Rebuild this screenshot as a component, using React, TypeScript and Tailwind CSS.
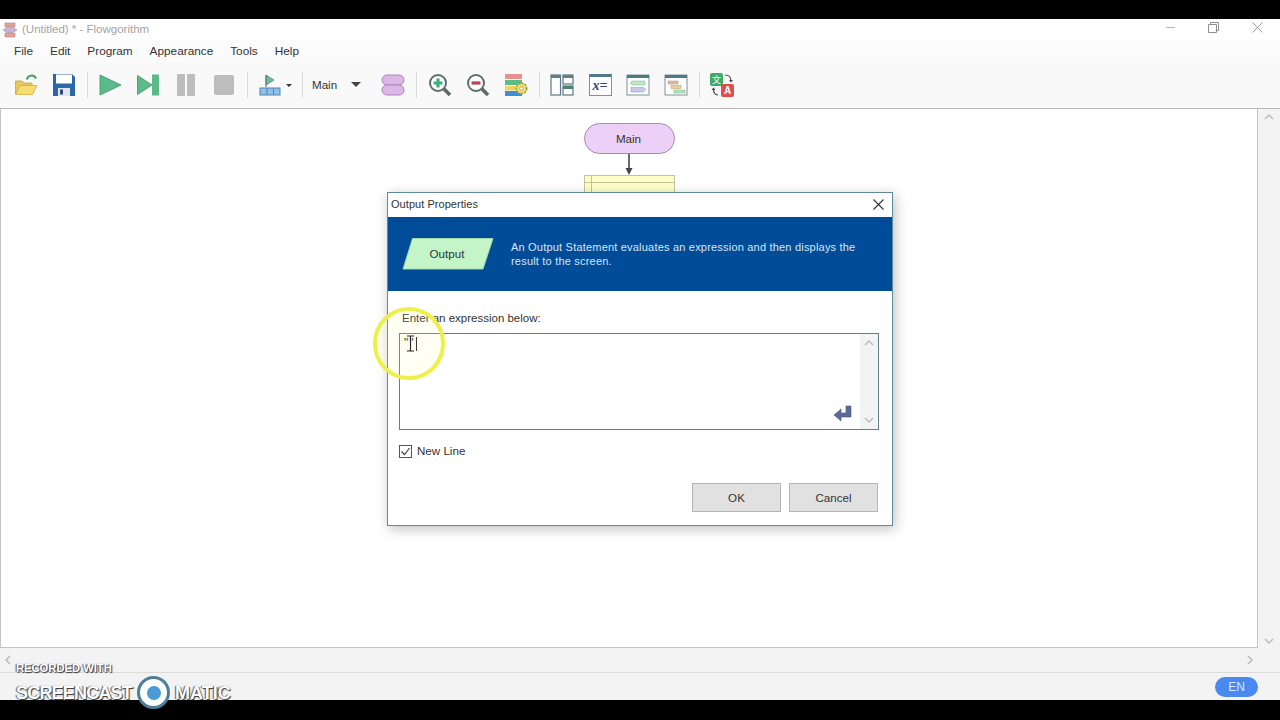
const Sep = () => (
  <div className="w-[8px] h-[26px] flex justify-center shrink-0">
    <div className="w-px h-full bg-[#dcdcdc]" />
  </div>
);

const Btn = ({ children }: { children: React.ReactNode }) => (
  <div className="w-[38px] h-[30px] flex items-center justify-center shrink-0">{children}</div>
);

const Open = () => (
  <svg width="24" height="24" viewBox="0 0 24 24">
    <path d="M13 6.5 C13.5 2 20 1 22 5.5" fill="none" stroke="#3f9a68" strokeWidth="2" />
    <path d="M1.5 21 V8 H8 L10 10 H18 V13 H6 Z" fill="#e8c85c" stroke="#c9a63a" strokeWidth="0.8" />
    <path d="M1.5 21.5 L6 12.5 H23 L18.5 21.5 Z" fill="#f6dc74" stroke="#cfae42" strokeWidth="0.8" />
  </svg>
);
const Save = () => (
  <svg width="24" height="24" viewBox="0 0 24 24">
    <path d="M1 1 H20 L23 4 V23 H1 Z" fill="#2c68a8" />
    <rect x="4" y="1.5" width="16" height="9" fill="#fff" />
    <rect x="6" y="15" width="12" height="8" fill="#dfe6ee" />
    <rect x="8" y="16.5" width="3" height="5" fill="#2b4e78" />
  </svg>
);
const Play = () => (
  <svg width="24" height="24" viewBox="0 0 24 24">
    <path d="M2 2 L23 12 L2 22 Z" fill="#5cb98a" stroke="#4ba377" strokeWidth="1" />
  </svg>
);
const Step = () => (
  <svg width="24" height="24" viewBox="0 0 24 24">
    <path d="M1.5 2.5 L16 12 L1.5 21.5 Z" fill="#5cb98a" stroke="#4ba377" strokeWidth="1" />
    <rect x="16" y="1.5" width="7" height="21" fill="#5cb98a" />
  </svg>
);
const Pause = () => (
  <svg width="20" height="24" viewBox="0 0 20 24">
    <rect x="1" y="1" width="8" height="22" fill="#bdbdbd" />
    <rect x="11" y="1" width="8" height="22" fill="#bdbdbd" />
  </svg>
);
const Stop = () => (
  <svg width="22" height="22" viewBox="0 0 22 22">
    <rect x="1" y="1" width="20" height="20" rx="2" fill="#bdbdbd" />
  </svg>
);
const Layout = () => (
  <svg width="22" height="22" viewBox="0 0 22 22">
    <path d="M7 1 L15 6 L7 11 Z" fill="#6cbf95" stroke="#4a8f72" strokeWidth="0.8" />
    <line x1="7" y1="1" x2="7" y2="13" stroke="#5b7f93" strokeWidth="1.2" />
    <rect x="1" y="14" width="20" height="7" fill="#8fc1e8" stroke="#4f86b5" strokeWidth="1" />
    <line x1="8" y1="14" x2="8" y2="21" stroke="#4f86b5" />
    <line x1="14.5" y1="14" x2="14.5" y2="21" stroke="#4f86b5" />
  </svg>
);
const Shapes = () => (
  <svg width="24" height="24" viewBox="0 0 24 24">
    <rect x="1" y="2" width="22" height="10" rx="5" fill="#dcb7e8" stroke="#a887b4" strokeWidth="1" />
    <rect x="1" y="12" width="22" height="10" rx="5" fill="#dcb7e8" stroke="#a887b4" strokeWidth="1" />
  </svg>
);
const Zoom = ({ plus }: { plus?: boolean }) => (
  <svg width="24" height="24" viewBox="0 0 24 24">
    <line x1="15" y1="15" x2="22" y2="22" stroke="#5d6a6a" strokeWidth="3.6" />
    <circle cx="10" cy="10" r="8" fill="#fff" stroke="#5d6f6c" strokeWidth="2" />
    {plus ? (
      <path d="M10 5.5 V14.5 M5.5 10 H14.5" stroke="#3eae7c" strokeWidth="3.2" />
    ) : (
      <path d="M5.5 10 H14.5" stroke="#b8464c" strokeWidth="3.2" />
    )}
  </svg>
);
const Styles = () => (
  <svg width="24" height="24" viewBox="0 0 24 24">
    <rect x="1" y="1" width="17" height="5" fill="#ea8f92" />
    <rect x="1" y="7" width="17" height="5" fill="#59bd85" />
    <rect x="1" y="13" width="17" height="4.5" fill="#f1d45e" />
    <rect x="1" y="18" width="17" height="5" fill="#3d8fd0" />
    <circle cx="17.5" cy="15.5" r="5.2" fill="#efe27a" stroke="#a49a3a" strokeWidth="1.6" strokeDasharray="2 1" />
    <circle cx="17.5" cy="15.5" r="1.8" fill="#fff" stroke="#a49a3a" strokeWidth="0.8" />
  </svg>
);
const Panes = () => (
  <svg width="24" height="22" viewBox="0 0 24 22">
    <rect x="1" y="1" width="9.5" height="20" fill="#fff" stroke="#5f7780" strokeWidth="1.2" />
    <rect x="1" y="1" width="9.5" height="3" fill="#5f7f88" />
    <rect x="13" y="1" width="10" height="9" fill="#fff" stroke="#5f7780" strokeWidth="1.2" />
    <rect x="13" y="1" width="10" height="3" fill="#5f7f88" />
    <rect x="13" y="12" width="10" height="9" fill="#fff" stroke="#5f7780" strokeWidth="1.2" />
    <rect x="13" y="12" width="10" height="3" fill="#4e8370" />
  </svg>
);
const VarWin = () => (
  <div className="relative w-[23px] h-[22px] border border-[#7f9298] border-t-[3px] border-t-[#4d7a88] bg-white flex items-center justify-center font-['Liberation_Serif',serif] italic font-bold text-[14px] leading-none text-[#33457a]">
    x=
  </div>
);
const Win = ({ chart }: { chart?: boolean }) => (
  <svg width="24" height="22" viewBox="0 0 24 22">
    <rect x="1" y="1" width="22" height="20" fill="#fff" stroke="#7f9298" strokeWidth="1" />
    <rect x="1" y="1" width="22" height="3" fill="#4d7a88" />
    {chart ? (
      <>
        <rect x="4" y="7" width="10" height="3" fill="#e2b7a6" stroke="#b08a78" strokeWidth="0.5" />
        <rect x="7" y="11.5" width="10" height="3" fill="#e6cf9a" stroke="#b09c6a" strokeWidth="0.5" />
        <rect x="10" y="16" width="11" height="3" fill="#b7e4be" stroke="#7fae88" strokeWidth="0.5" />
      </>
    ) : (
      <>
        <path d="M6 7 H19 V11 H6 L4 9 Z" fill="#bfe8c6" stroke="#83b58e" strokeWidth="0.5" />
        <path d="M5 13.5 H17 L20 15.5 L17 18 H5 Z" fill="#c9c8ef" stroke="#908fc0" strokeWidth="0.5" />
      </>
    )}
  </svg>
);
const Translate = () => (
  <div className="relative w-[24px] h-[24px]">
    <div className="absolute left-0 top-0 w-[13px] h-[13px] rounded-[2px] bg-[#3fa968] text-white text-[9px] leading-[13px] text-center font-['Noto_Sans_CJK_SC',sans-serif]">文</div>
    <div className="absolute right-0 bottom-0 w-[13px] h-[13px] rounded-[2px] bg-[#d9504f] text-white text-[10px] font-bold leading-[13px] text-center font-['Liberation_Sans',sans-serif]">A</div>
    <svg className="absolute inset-0" width="24" height="24" viewBox="0 0 24 24">
      <path d="M15 2 C19 2 21 4 21 8" fill="none" stroke="#444" strokeWidth="1.1" />
      <path d="M19 7 L21 9.5 L23 7 Z" fill="#444" />
      <path d="M8 22 C5 22 3.5 20 3.5 16" fill="none" stroke="#444" strokeWidth="1.1" />
      <path d="M1.5 17 L3.5 14.5 L5.5 17 Z" fill="#444" />
    </svg>
  </div>
);

const Chevron = ({ d }: { d: string }) => (
  <svg width="10" height="10" viewBox="0 0 10 10">
    <path d={d} fill="none" stroke="#bcbcbc" strokeWidth="1.5" />
  </svg>
);

export default function App() {
  return (
    <div className="relative w-[1280px] h-[720px] overflow-hidden bg-black font-['Liberation_Sans',sans-serif] flex flex-col">
      <div className="h-[19px] shrink-0 bg-black" />

      <div className="h-[21px] shrink-0 bg-white flex items-center pl-[2px] pt-px relative">
        <svg width="16" height="16" viewBox="0 0 16 16">
          <rect x="3" y="1" width="10" height="4" fill="#e9a08f" stroke="#a98a8a" strokeWidth="0.6" />
          <path d="M1 8 L8 4 L15 8 L8 12 Z" fill="#c9b2d8" stroke="#9c8aa8" strokeWidth="0.6" />
          <rect x="3" y="11" width="10" height="4" fill="#e9a08f" stroke="#a98a8a" strokeWidth="0.6" />
        </svg>
        <span className="ml-[4px] text-[11.5px] text-[#a3a3a3]">(Untitled) * - Flowgorithm</span>
        <div className="absolute right-[17px] top-[3px] flex items-center gap-[33px]">
          <div className="w-[9px] h-px bg-[#b5b5b5]" />
          <svg width="11" height="11" viewBox="0 0 11 11">
            <path d="M0.5 2.5 H8.5 V10.5 H0.5 Z M2.5 2.5 V0.5 H10.5 V8.5 H8.5" fill="none" stroke="#8f8f8f" />
          </svg>
          <svg width="11" height="11" viewBox="0 0 11 11">
            <path d="M0.5 0.5 L10.5 10.5 M10.5 0.5 L0.5 10.5" stroke="#9a9a9a" />
          </svg>
        </div>
      </div>

      <div className="h-[22px] shrink-0 bg-[#fbfbfb] flex items-center pl-[14px] gap-[17px] pt-[1px] text-[11.8px] text-[#333]">
        <span>File</span>
        <span>Edit</span>
        <span>Program</span>
        <span>Appearance</span>
        <span>Tools</span>
        <span>Help</span>
      </div>

      <div className="h-[47px] shrink-0 bg-[#f8f9f8] border-b border-[#b9b9b9] flex items-center pl-[7px]">
        <Btn><Open /></Btn>
        <Btn><Save /></Btn>
        <Sep />
        <Btn><Play /></Btn>
        <Btn><Step /></Btn>
        <Btn><Pause /></Btn>
        <Btn><Stop /></Btn>
        <Sep />
        <div className="w-[47px] h-[30px] shrink-0 flex items-center pl-[8px] gap-[5px]">
          <Layout />
          <div className="w-0 h-0 border-x-[3px] border-x-transparent border-t-[3px] border-t-[#333]" />
        </div>
        <Sep />
        <div className="w-[68px] shrink-0 flex items-center pl-[6px] text-[11.6px] text-[#333]">
          <span>Main</span>
          <div className="ml-[14px] w-0 h-0 border-x-[5px] border-x-transparent border-t-[5px] border-t-[#444]" />
        </div>
        <Btn><Shapes /></Btn>
        <div className="w-[9px] flex justify-center shrink-0">
          <div className="w-px h-[26px] bg-[#dcdcdc]" />
        </div>
        <Btn><Zoom plus /></Btn>
        <Btn><Zoom /></Btn>
        <Btn><Styles /></Btn>
        <Sep />
        <Btn><Panes /></Btn>
        <Btn><VarWin /></Btn>
        <Btn><Win /></Btn>
        <Btn><Win chart /></Btn>
        <Sep />
        <Btn><Translate /></Btn>
      </div>

      <div className="h-[539px] shrink-0 flex bg-[#f3f3f3]">
        <div className="relative w-[1258px] bg-white border-l border-r border-b border-[#c4c4c4] shrink-0 overflow-hidden">
          {/* flowchart nodes sit on a free canvas */}
          <div className="absolute left-[583px] top-[14px] w-[91px] h-[31px] rounded-full bg-[#ecd0f8] border border-[#a58bb0] flex items-center justify-center text-[11.6px] text-[#333]">
            <span className="-ml-[2px]">Main</span>
          </div>
          <svg className="absolute left-[623px] top-[45px]" width="10" height="22" viewBox="0 0 10 22">
            <line x1="5" y1="0" x2="5" y2="15" stroke="#444" strokeWidth="1.6" />
            <path d="M1.5 14 H8.5 L5 21 Z" fill="#444" />
          </svg>
          <div className="absolute left-[583px] top-[66px] w-[91px] h-[40px] bg-[#ffffc8] border border-[#c4c498]">
            <div className="absolute left-[6px] top-0 bottom-0 w-px bg-[#c4c498]" />
            <div className="absolute left-0 right-0 top-[6px] h-px bg-[#c4c498]" />
          </div>
        </div>
        <div className="flex-1 flex flex-col items-center justify-between pt-[3px] pb-[2px]">
          <Chevron d="M1 7 L5 3 L9 7" />
          <Chevron d="M1 3 L5 7 L9 3" />
        </div>
      </div>

      <div className="h-[25px] shrink-0 bg-[#f3f3f3] border-b border-[#dcdcdc] flex items-center justify-between pl-[3px] pr-[25px]">
        <Chevron d="M7 1 L3 5 L7 9" />
        <Chevron d="M3 1 L7 5 L3 9" />
      </div>

      <div className="h-[27px] shrink-0 bg-[#f3f3f3] flex items-center justify-end pr-[22px]">
        <div className="w-[43px] h-[20px] rounded-full bg-[#4a8af0] text-[#dbe8ff] text-[12px] flex items-center justify-center">EN</div>
      </div>

      <div className="flex-1 bg-black" />

      {/* modal dialog */}
      <div className="absolute left-[387px] top-[192px] w-[506px] h-[334px] bg-white border border-[#5f8a9c] shadow-[2px_3px_12px_rgba(0,0,0,0.25)] flex flex-col">
        <div className="h-[24px] shrink-0 flex items-center justify-between pl-[3px] pr-[8px] pb-[2px] text-[11px] tracking-[0.05px] text-[#333]">
          <span>Output Properties</span>
          <svg width="11" height="11" viewBox="0 0 11 11">
            <path d="M0.5 0.5 L10.5 10.5 M10.5 0.5 L0.5 10.5" stroke="#333" strokeWidth="1.1" />
          </svg>
        </div>
        <div className="h-[74px] shrink-0 bg-[#004c99] flex items-center pl-[14px] pb-px">
          <svg width="92" height="32" viewBox="0 0 92 32" className="shrink-0">
            <path d="M10.5 0.5 H91 L81 31 H1 Z" fill="#c3f5c8" stroke="#9ed8a6" />
            <text x="45" y="20" textAnchor="middle" fontSize="11.6" fill="#333" fontFamily="Liberation Sans, sans-serif">Output</text>
          </svg>
          <p className="ml-[17px] w-[360px] text-[11px] leading-[14px] tracking-[0.2px] text-[#d6e6f5]">
            An Output Statement evaluates an expression and then displays the result to the screen.
          </p>
        </div>
        <div className="flex-1 flex flex-col px-[11px] pt-[21px]">
          <div className="pl-[3px] h-[14px] flex items-center text-[11.5px] leading-none tracking-[0px] text-[#333]">Enter an expression below:</div>
          <div className="mt-[7px] w-[480px] h-[97px] border border-[#5f7f8f] bg-white flex justify-between shrink-0">
            <div className="relative pl-[4px] pt-[2px] text-[12px] text-[#333] leading-[14px] flex">
              <span className="tracking-[1px]">""</span>
              <span className="ml-[1px] w-px h-[14px] mt-[1px] bg-[#222]" />
            </div>
            <div className="relative w-[18px] bg-[#f2f3f5] flex flex-col items-center justify-between py-[4px]">
              <Chevron d="M1 7 L5 3 L9 7" />
              <Chevron d="M1 3 L5 7 L9 3" />
              <svg className="absolute left-[-27px] top-[71px]" width="20" height="17" viewBox="0 0 20 17">
                <path d="M13 1 H18 V12 H8 V16 L1 10 L8 4 V8 H13 Z" fill="#5d6b9c" stroke="#46527c" strokeWidth="0.6" />
              </svg>
            </div>
          </div>
          <div className="mt-[13px] flex items-center h-[16px]">
            <div className="w-[13px] h-[13px] border border-[#555] bg-white flex items-center justify-center">
              <svg width="11" height="11" viewBox="0 0 11 11">
                <path d="M1.5 5.5 L4.5 8.5 L9.5 2" fill="none" stroke="#444" strokeWidth="1.2" />
              </svg>
            </div>
            <span className="ml-[5px] text-[11.6px] text-[#333]">New Line</span>
          </div>
          <div className="mt-[24px] flex justify-end gap-[8px] pr-[3px]">
            <div className="w-[89px] h-[29px] bg-[#e1e1e1] border border-[#b5b5b5] flex items-center justify-center text-[11.6px] text-[#333]">OK</div>
            <div className="w-[89px] h-[29px] bg-[#e1e1e1] border border-[#b5b5b5] flex items-center justify-center text-[11.6px] text-[#333]">Cancel</div>
          </div>
        </div>
      </div>

      {/* cursor highlight over the dialog */}
      <div className="absolute left-[373px] top-[307px] w-[72px] h-[73px] rounded-full border-[4px] border-[#eef04a] bg-[rgba(255,255,160,0.12)]" />
      <svg className="absolute left-[406px] top-[335px]" width="9" height="17" viewBox="0 0 9 17">
        <path d="M1 1 H8 M4.5 1 V16 M1 16 H8" fill="none" stroke="#222" strokeWidth="1.1" />
      </svg>

      {/* recorder watermark */}
      <div className="absolute left-[16px] top-[661px] text-[11.2px] leading-[14px] font-bold text-white [text-shadow:1px_1px_1px_#333,-1px_0_1px_#555]">RECORDED WITH</div>
      <div className="absolute left-[16px] top-[676px] flex items-center text-[18px] leading-[22px] font-bold text-white [text-shadow:1px_1px_1px_#333,-1px_0_1px_#555]">
        <span className="tracking-[-0.8px]">SCREENCAST</span>
        <div className="mx-[5px] w-[33px] h-[33px] rounded-full border-[3px] border-[#4d7f99] bg-white flex items-center justify-center">
          <div className="w-[14px] h-[14px] rounded-full bg-[#4a9ad4]" />
        </div>
        <span className="tracking-[0px]">MATIC</span>
      </div>
    </div>
  );
}
